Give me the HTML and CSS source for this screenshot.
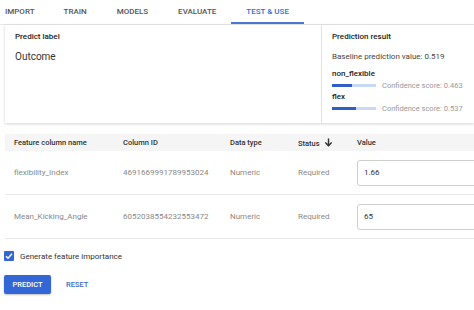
FILE: index.html
```html
<!DOCTYPE html>
<html lang="en">
<head>
  <meta charset="UTF-8" />
  <title>Test &amp; Use</title>
  <link rel="stylesheet" href="styles.css">
</head>
<body>

  <nav class="tabs">
    <span class="tab">IMPORT</span>
    <span class="tab">TRAIN</span>
    <span class="tab">MODELS</span>
    <span class="tab">EVALUATE</span>
    <span class="tab active">TEST &amp; USE</span>
  </nav>

  <div class="card">
    <div class="panel panel-label">
      <div class="panel-title">Predict label</div>
      <div class="label-value">Outcome</div>
    </div>
    <div class="panel panel-result">
      <div class="panel-title">Prediction result</div>
      <div class="baseline">Baseline prediction value: 0.519</div>
      <div class="class-name">non_flexible</div>
      <div class="score-row">
        <div class="bar"><div class="bar-fill" style="width:46%"></div></div>
        <span class="score">Confidence score: 0.463</span>
      </div>
      <div class="class-name">flex</div>
      <div class="score-row">
        <div class="bar"><div class="bar-fill" style="width:54%"></div></div>
        <span class="score">Confidence score: 0.537</span>
      </div>
    </div>
  </div>

  <div class="table-wrap">
    <table class="features">
      <thead>
        <tr>
          <th class="col-name">Feature column name</th>
          <th class="col-id">Column ID</th>
          <th class="col-type">Data type</th>
          <th class="col-status">Status
            <svg class="sort" width="9" height="9" viewBox="0 0 10 10"><path d="M5 0.5v8M1.5 5l3.5 3.5 3.5-3.5" fill="none" stroke="#333" stroke-width="1.6"/></svg>
          </th>
          <th class="col-value">Value</th>
        </tr>
      </thead>
      <tbody>
        <tr>
          <td>flexibility_Index</td>
          <td>4691669991789953024</td>
          <td>Numeric</td>
          <td>Required</td>
          <td><input class="value-input" type="text" value="1.66" /></td>
        </tr>
        <tr>
          <td>Mean_Kicking_Angle</td>
          <td>6052038554232553472</td>
          <td>Numeric</td>
          <td>Required</td>
          <td><input class="value-input" type="text" value="65" /></td>
        </tr>
      </tbody>
    </table>
  </div>

  <label class="check">
    <span class="box">
      <svg width="10" height="10" viewBox="0 0 10 10"><path d="M2 5.2l2 2 4-4.4" fill="none" stroke="#fff" stroke-width="1.4"/></svg>
    </span>
    Generate feature importance
  </label>

  <div class="actions">
    <button class="btn-primary">PREDICT</button>
    <button class="btn-text">RESET</button>
  </div>

</body>
</html>
```

FILE: styles.css
```css
body {
  margin: 0;
  font-family: Roboto, "Noto Sans", sans-serif;
  background: #fff;
  color: #333;
  width: 474px;
  height: 310px;
  overflow: hidden;
}

.tabs {
  display: flex;
  height: 24px;
  border-bottom: 1px solid #e6e6e6;
}

.tab {
  padding: 0 15px;
  font-size: 8px;
  font-weight: 500;
  color: #555;
  line-height: 23px;
  border-bottom: 2px solid transparent;
  white-space: nowrap;
}

.tab:first-child { padding-left: 5px; }
.tab:nth-child(2) { padding-left: 14px; }

.tab.active {
  color: #3b6ccf;
  border-bottom-color: #4a78d0;
}

.card {
  display: flex;
  margin-left: 5px;
  height: 98px;
  background: #fff;
  box-shadow: 0 1px 3px rgba(0,0,0,0.18);
}

.panel-label {
  width: 306px;
  padding: 6px 0 0 10px;
}

.panel-result {
  flex: 1;
  padding: 6px 0 0 10px;
  border-left: 1px solid #e3e3e3;
}

.panel-title {
  font-size: 8px;
  font-weight: 500;
  color: #222;
  line-height: 12px;
}

.label-value {
  margin-top: 8px;
  font-size: 10px;
  color: #333;
}

.baseline {
  margin: 8px 0 6px;
  font-size: 8px;
  color: #444;
  line-height: 12px;
}

.class-name {
  margin-top: 1px;
  font-size: 8px;
  font-weight: 500;
  color: #222;
  line-height: 10px;
}

.score-row {
  display: flex;
  align-items: center;
  gap: 6px;
  height: 12px;
}

.bar {
  width: 44px;
  height: 3px;
  background: #c9d8f5;
}

.bar-fill {
  height: 100%;
  background: #2f5fc4;
}

.score {
  font-size: 7.5px;
  color: #999;
}

.table-wrap {
  margin: 11px 0 0 5px;
  width: 469px;
  overflow: hidden;
}

.features {
  width: 560px;
  table-layout: fixed;
  border-collapse: collapse;
  font-size: 8px;
}

.features th {
  background: #f5f5f5;
  height: 17px;
  padding: 0;
  text-align: left;
  font-size: 7.5px;
  font-weight: 500;
  color: #333;
  white-space: nowrap;
}

.features td {
  height: 43px;
  padding: 0;
  color: #888;
  border-bottom: 1px solid #e8e8e8;
  white-space: nowrap;
}

.features th:first-child,
.features td:first-child {
  padding-left: 9px;
}

.col-name { width: 109px; }
.col-id { width: 107px; }
.col-type { width: 68px; }
.col-status { width: 59px; }

.sort {
  vertical-align: -1px;
  margin-left: 3px;
}

.value-input {
  box-sizing: border-box;
  width: 160px;
  height: 26px;
  padding: 0 6px;
  border: 1px solid #cfcfcf;
  border-radius: 3px;
  font-family: Roboto, sans-serif;
  font-size: 8px;
  color: #333;
}

.check {
  display: flex;
  align-items: center;
  gap: 6px;
  margin: 12px 0 0 4px;
  font-size: 8px;
  color: #333;
}

.box {
  display: flex;
  align-items: center;
  justify-content: center;
  width: 10px;
  height: 10px;
  border-radius: 1px;
  background: #3367d6;
}

.actions {
  display: flex;
  align-items: center;
  gap: 8px;
  margin: 14px 0 0 4px;
}

.btn-primary {
  width: 47px;
  height: 19px;
  padding: 0;
  border: none;
  border-radius: 2px;
  background: #3367d6;
  color: #fff;
  font-family: Roboto, sans-serif;
  font-size: 7.5px;
  font-weight: 500;
  box-shadow: 0 1px 2px rgba(0,0,0,0.25);
}

.btn-text {
  padding: 0 7px;
  border: none;
  background: none;
  color: #3b6ccf;
  font-family: Roboto, sans-serif;
  font-size: 7.5px;
  font-weight: 500;
}
```
